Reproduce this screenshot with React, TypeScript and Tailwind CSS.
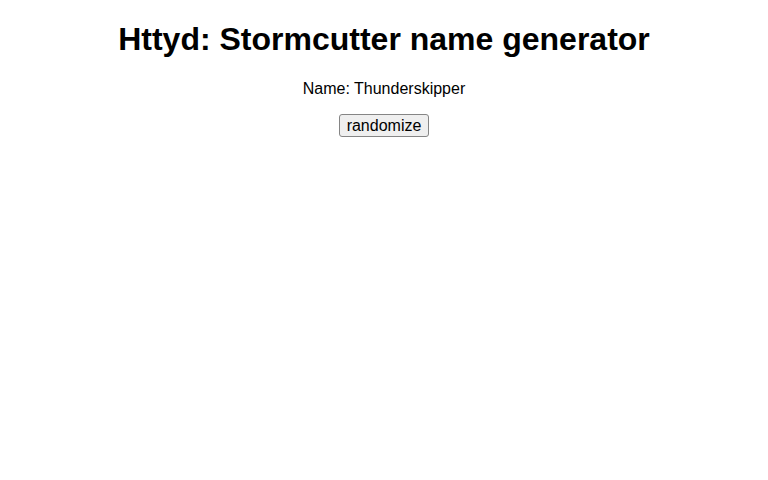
import { useState } from "react";

const firstParts = ["Thunder", "Storm", "Cloud", "Wind", "Sky", "Gale", "Rain"];
const lastParts = ["skipper", "wing", "cutter", "rider", "flyer", "claw", "tail"];

export default function App() {
  const [name, setName] = useState("Thunderskipper");

  const randomize = () => {
    const a = firstParts[Math.floor(Math.random() * firstParts.length)];
    const b = lastParts[Math.floor(Math.random() * lastParts.length)];
    setName(a + b);
  };

  return (
    <div className="flex flex-col items-center bg-white text-black font-['Liberation_Sans',Arial,sans-serif]">
      <h1 className="mt-[21.44px] mb-[21.44px] text-[32px] leading-[37px] font-bold">
        Httyd: Stormcutter name generator
      </h1>
      <p className="mb-4 text-base leading-[18.4px]">Name: {name}</p>
      <button
        type="button"
        onClick={randomize}
        className="rounded-[3px] border border-[#858585] bg-[#efefef] px-[7px] py-[1px] text-base leading-[19px] hover:bg-[#e5e5e5]"
      >
        randomize
      </button>
    </div>
  );
}
